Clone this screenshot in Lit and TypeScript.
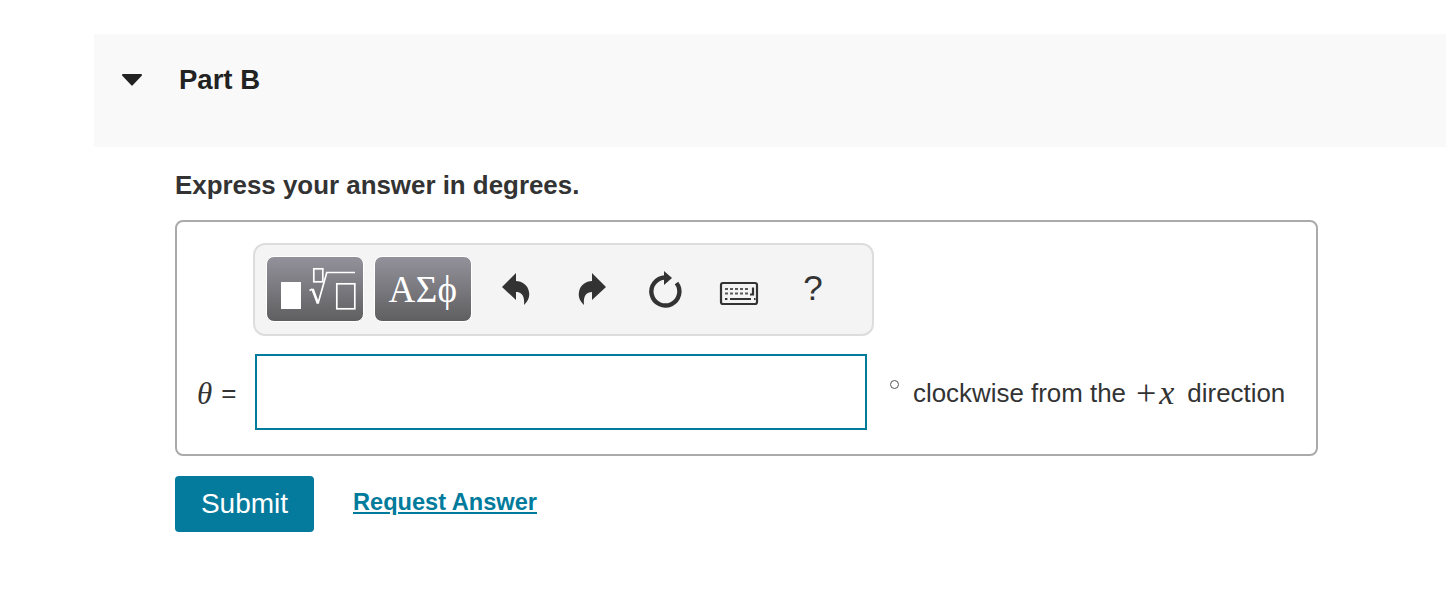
import { LitElement, html, css } from "lit";
import { customElement } from "lit/decorators.js";

@customElement("app-root")
export class AppRoot extends LitElement {
  static override styles = css`
    :host {
      display: block;
      font-family: "Liberation Sans", Arial, sans-serif;
      color: #333;
      background: #fff;
      min-height: 609px;
      padding: 34px 0 0 94px;
      box-sizing: border-box;
    }
    .header {
      box-sizing: border-box;
      height: 113px;
      background: #f9f9f9;
      display: flex;
      align-items: center;
      padding: 0 0 21px 28px;
    }
    .caret {
      width: 20px;
      height: 12px;
    }
    .title {
      margin-left: 37px;
      font-size: 27.5px;
      font-weight: 700;
      color: #222;
    }
    .body {
      padding: 23px 128px 0 81px;
    }
    .prompt {
      font-size: 25.9px;
      font-weight: 700;
      line-height: 30px;
    }
    .answer {
      box-sizing: border-box;
      width: 1143px;
      height: 236px;
      margin-top: 20px;
      border: 2px solid #aaa;
      border-radius: 8px;
      padding: 21px 0 0 76px;
    }
    .toolbar {
      box-sizing: border-box;
      width: 621px;
      height: 93px;
      background: #f4f4f4;
      border: 2px solid #ddd;
      border-radius: 12px;
      display: flex;
      align-items: center;
      padding: 0 0 1px 11px;
    }
    .tpl {
      box-sizing: border-box;
      width: 98px;
      height: 66px;
      border: 1px solid #fff;
      border-radius: 8px;
      background: linear-gradient(#93929b, #5f5f61);
      color: #fff;
      display: flex;
      align-items: center;
      justify-content: center;
      margin-right: 10px;
    }
    .tpl svg {
      display: block;
    }
    .greek {
      font-family: "Liberation Serif", serif;
      font-size: 37px;
      letter-spacing: 0.4px;
    }
    .tool {
      display: flex;
      align-items: center;
      justify-content: center;
      width: 50px;
      height: 60px;
      color: #333;
    }
    .undo { margin-left: 8.5px; }
    .redo { margin-left: 27px; }
    .reset { margin-left: 22.5px; }
    .keys { margin-left: 24px; }
    .keys svg { margin-top: 9px; }
    .help {
      margin-left: 24px;
      font-size: 35px;
      padding-bottom: 2px;
      box-sizing: border-box;
    }
    .row {
      display: flex;
      align-items: center;
      margin-top: 18px;
      margin-left: -56px;
    }
    .label {
      display: flex;
      align-items: center;
      width: 58px;
      padding-top: 3px;
      box-sizing: border-box;
      font-size: 26px;
      white-space: nowrap;
    }
    .label i {
      font-family: "Liberation Serif", serif;
      font-size: 31px;
      margin-right: 9px;
    }
    .input {
      box-sizing: border-box;
      width: 612px;
      height: 76px;
      border: 2px solid #007b9c;
      background: #fff;
    }
    .unit {
      display: flex;
      align-items: center;
      margin-left: 23px;
      padding-top: 2px;
      font-size: 25.9px;
      white-space: nowrap;
    }
    .deg {
      box-sizing: border-box;
      width: 9px;
      height: 9px;
      border: 1px solid #555;
      border-radius: 50%;
      margin: -18px 14px 0 0;
    }
    .math {
      display: flex;
      align-items: center;
      font-family: "Liberation Serif", serif;
      font-size: 36px;
      margin: 0 13px 0 10px;
    }
    .math i {
      font-size: 34px;
      margin-left: 3px;
    }
    .actions {
      display: flex;
      align-items: center;
      margin-top: 20px;
    }
    .submit {
      width: 139px;
      height: 56px;
      border: 0;
      border-radius: 4px;
      background: #047a9c;
      color: #fff;
      font: 400 28px "Liberation Sans", Arial, sans-serif;
      padding: 0;
    }
    .link {
      margin: -4px 0 0 39px;
      font-size: 23.6px;
      font-weight: 700;
      color: #007b9c;
      text-decoration: underline;
    }
  `;

  override render() {
    return html`
      <div class="header">
        <svg class="caret" viewBox="0 0 20 12">
          <path d="M1 0h18a1 1 0 0 1 .7 1.7l-9 9.6a1 1 0 0 1-1.4 0l-9-9.6A1 1 0 0 1 1 0z" fill="#222" />
        </svg>
        <div class="title">Part B</div>
      </div>
      <div class="body">
        <div class="prompt">Express your answer in degrees.</div>
        <div class="answer">
          <div class="toolbar">
            <div class="tpl">
              <svg width="96" height="64" viewBox="267 257 96 64" fill="none" stroke="#fff">
                <rect x="281" y="282" width="20" height="27" fill="#fff" stroke="none" />
                <rect x="313.8" y="268.8" width="9" height="13" stroke-width="1.7" />
                <path d="M309.5 290.5l3-1.5" stroke-width="1.6" />
                <path d="M312.5 289l5.5 14.5" stroke-width="2.6" />
                <path d="M318 303.5l8.8-31h28.2" stroke-width="1.7" />
                <rect x="336.8" y="283.8" width="18" height="25" stroke-width="1.7" />
              </svg>
            </div>
            <div class="tpl greek">ΑΣϕ</div>
            <div class="tool undo">
              <svg width="32" height="38" viewBox="500 270 32 38">
                <path d="M516 273 502 287l14 13v-8c5 0 9 3 8 13 4-4 6-8 5-13-1-7-7-11-13-11z" fill="#333" />
              </svg>
            </div>
            <div class="tool redo">
              <svg width="32" height="38" viewBox="500 270 32 38">
                <path transform="matrix(-1 0 0 1 1031 0)" d="M516 273 502 287l14 13v-8c5 0 9 3 8 13 4-4 6-8 5-13-1-7-7-11-13-11z" fill="#333" />
              </svg>
            </div>
            <div class="tool reset">
              <svg width="36" height="42" viewBox="647 268 36 42" fill="none">
                <path d="M665 277.5a14 14 0 1 0 11.5 5.5" stroke="#333" stroke-width="4.4" />
                <path d="M664 271l8 7-8 7z" fill="#333" />
              </svg>
            </div>
            <div class="tool keys">
              <svg width="40" height="25" viewBox="719 281 40 25" fill="none" stroke="#333">
                <rect x="721" y="283" width="36" height="21" rx="2" stroke-width="2.2" />
                <path d="M725 289h23M725 293.5h23" stroke-width="2" stroke-dasharray="3 2" opacity=".8" />
                <path d="M753 287.5v7h-3M730 299h21" stroke-width="2.2" />
                <path d="M725 299h2.4M754 299h1.5" stroke-width="2.2" />
              </svg>
            </div>
            <div class="tool help">?</div>
          </div>
          <div class="row">
            <div class="label"><i>θ</i>=</div>
            <div class="input"></div>
            <div class="unit">
              <span class="deg"></span>clockwise from the
              <span class="math">+<i>x</i></span>direction
            </div>
          </div>
        </div>
        <div class="actions">
          <button class="submit">Submit</button>
          <a class="link">Request Answer</a>
        </div>
      </div>
    `;
  }
}
